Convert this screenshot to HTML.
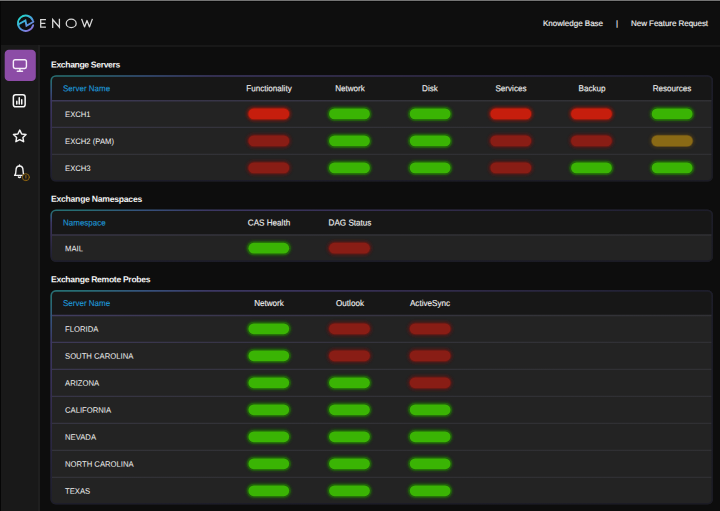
<!DOCTYPE html>
<html><head><meta charset="utf-8"><title>ENOW</title>
<style>
html,body{margin:0;padding:0;}
body{width:720px;height:511px;overflow:hidden;background:#0d0d0d;position:relative;font-family:"Liberation Sans",sans-serif;color:#ececec;}
#topline{position:absolute;left:0;top:0;width:720px;height:1px;background:#747474;border-bottom:1px solid #070707;z-index:5;}
#leftline{position:absolute;left:0;top:1px;width:1px;height:510px;background:#060606;z-index:5;}
#hdr{position:absolute;left:0;top:1px;width:720px;height:44px;background:#0e0e0e;border-bottom:2px solid #181818;}
#side{position:absolute;left:1px;top:45px;width:37px;height:466px;background:#191919;border-right:2px solid #1f1f1f;}
.nav{position:absolute;top:15px;font-size:8px;line-height:16px;color:#f0f0f0;white-space:nowrap;transform:translateY(1.0px) scaleY(1.0) rotate(0.03deg);-webkit-text-stroke:0.15px #f0f0f0;}
.ttl{position:absolute;left:51px;font-size:8.6px;font-weight:bold;line-height:16px;color:#f2f2f2;white-space:nowrap;letter-spacing:-0.35px;}
.hc{position:absolute;font-size:8.1px;line-height:16px;white-space:nowrap;color:#efefef;transform:scaleY(1.09);-webkit-text-stroke:0.12px #efefef;}
.hc.b{color:#1e98d8;font-size:8px;-webkit-text-stroke:0.12px #1e98d8;}
.hc.c{width:100px;text-align:center;}
.rc{position:absolute;font-size:7.7px;line-height:16px;white-space:nowrap;color:#f0f0f0;}
svg{position:absolute;overflow:visible;}
</style></head><body>
<div id="topline"></div><div id="leftline"></div>
<div id="hdr"></div>
<div id="side"></div>

<!-- tables / pills / logo / icons graphics -->
<svg style="left:0;top:0" width="720" height="511" viewBox="0 0 720 511" fill="none">
<defs>
<linearGradient id="lg" gradientUnits="userSpaceOnUse" x1="19" y1="15" x2="32" y2="32"><stop offset="0" stop-color="#1be3c8"/><stop offset="0.5" stop-color="#4a9fdc"/><stop offset="1" stop-color="#a066dc"/></linearGradient>
<linearGradient id="gb" x1="0" y1="0" x2="1" y2="1">
<stop offset="0" stop-color="#276f73"/><stop offset="0.025" stop-color="#276c73"/><stop offset="0.07" stop-color="#35517c"/><stop offset="0.12" stop-color="#3c3763"/><stop offset="0.26" stop-color="#342d4f"/><stop offset="0.42" stop-color="#242338"/><stop offset="0.5" stop-color="#1d1d2a"/><stop offset="1" stop-color="#1b1b24"/>
</linearGradient>
<linearGradient id="gs" x1="0" y1="0" x2="1" y2="1">
<stop offset="0" stop-color="#464268"/><stop offset="0.10" stop-color="#3e3a5a"/><stop offset="0.22" stop-color="#38354a"/><stop offset="0.40" stop-color="#333339"/><stop offset="0.60" stop-color="#303034"/><stop offset="1" stop-color="#2f2f32"/>
</linearGradient>
<filter id="bl" x="-20%" y="-50%" width="140%" height="200%"><feGaussianBlur stdDeviation="0.9"/></filter>
<g id="pg"><rect x="-23.00" y="-7.95" width="46.00" height="15.90" rx="7.95" fill="#1f550c" opacity="0.6" filter="url(#bl)"/><rect x="-22.10" y="-7.05" width="44.20" height="14.10" rx="7.05" fill="#225c0d"/><rect x="-20.40" y="-5.35" width="40.8" height="10.7" rx="5.35" fill="#3ab404"/></g>
<g id="pr"><rect x="-23.00" y="-7.95" width="46.00" height="15.90" rx="7.95" fill="#78190f" opacity="0.6" filter="url(#bl)"/><rect x="-21.40" y="-6.35" width="42.80" height="12.70" rx="6.35" fill="#7a1c12"/><rect x="-20.40" y="-5.35" width="40.8" height="10.7" rx="5.35" fill="#c61e0d"/></g>
<g id="pd"><rect x="-23.00" y="-7.95" width="46.00" height="15.90" rx="7.95" fill="#5a1814" opacity="0.55" filter="url(#bl)"/><rect x="-21.40" y="-6.35" width="42.80" height="12.70" rx="6.35" fill="#5a1a16"/><rect x="-20.40" y="-5.35" width="40.8" height="10.7" rx="5.35" fill="#891d15"/></g>
<g id="py"><rect x="-23.00" y="-7.95" width="46.00" height="15.90" rx="7.95" fill="#503e14" opacity="0.4" filter="url(#bl)"/><rect x="-21.20" y="-6.15" width="42.40" height="12.30" rx="6.15" fill="#5a4618"/><rect x="-20.40" y="-5.35" width="40.8" height="10.7" rx="5.35" fill="#8a6a15"/></g>
</defs>

<!-- active nav tile -->
<rect x="4.7" y="49.8" width="31.1" height="31.3" rx="4.2" fill="#8c4ca6"/>

<!-- logo -->
<path d="M32.8 20.3 A7.7 7.7 0 1 0 33.14 25.24" stroke="url(#lg)" stroke-width="1.9" stroke-linecap="round"/>
<path d="M18.2 24.5 L25.4 20.5 L26.5 25.8 L33.4 21.8" stroke="url(#lg)" stroke-width="1.9" stroke-linejoin="miter" stroke-linecap="round"/>
<g stroke="#d8d8d8" stroke-width="1.3" stroke-linecap="square" stroke-linejoin="miter">
<path d="M45.3 19.6 H40.7 V27.2 H45.3 M40.7 23.3 H44.7"/>
<path d="M52.7 27.3 V19.5 L59.4 27.2 V19.5"/>
<ellipse cx="71.2" cy="23.4" rx="4.95" ry="4.2"/>
<path d="M81.8 19.5 L84.5 26.9 L87.0 20.5 L89.5 26.9 L92.2 19.5" stroke-linejoin="round"/>
</g>

<!-- sidebar icons -->
<g transform="translate(12.6 59) scale(0.9733 1)" stroke="#f6eefa" stroke-width="1.45" stroke-linecap="round" stroke-linejoin="round">
<rect x="0.8" y="0.8" width="13.4" height="8.6" rx="1.8"/><path d="M7.5 9.6V12M4.8 12.2H10.2"/>
</g>
<g transform="translate(12.6 94) scale(0.95 0.9714)" stroke="#f6f6f6" stroke-width="1.6" stroke-linecap="round">
<rect x="0.8" y="0.8" width="12.4" height="12.4" rx="2.4"/><path d="M4.4 10.2V7.6M7 10.2V3.9M9.6 10.2V6"/>
</g>
<g transform="translate(12.55 129.1) scale(1.03 1.0)" stroke="#f2f2f2" stroke-width="1.45" stroke-linejoin="round">
<path d="M7 1.0 L8.85 4.85 L13.1 5.45 L10.05 8.4 L10.75 12.6 L7 10.6 L3.25 12.6 L3.95 8.4 L0.9 5.45 L5.15 4.85 Z"/>
</g>
<g transform="translate(13.5 164)" stroke="#f2f2f2" stroke-width="1.4" stroke-linecap="round" stroke-linejoin="round">
<path d="M6 0.9V2"/>
<path d="M1.1 11.4 C2.4 10.2 2.5 8.8 2.5 6.2 C2.5 3.6 3.9 2.0 6 2.0 C8.1 2.0 9.5 3.6 9.5 6.2 C9.5 8.8 9.6 10.2 10.9 11.4 Z"/><path d="M4.9 12.9 C5.3 13.7 6.7 13.7 7.1 12.9"/>
<circle cx="12.4" cy="13.2" r="3.5" stroke="#8f6410" stroke-width="1" fill="#191919"/><path d="M12.4 11.5V13.6M12.4 14.9V15" stroke="#a87412" stroke-width="0.9"/>
</g>

<clipPath id="c1"><rect x="50.4" y="75.2" width="662.6" height="106.4" rx="5.5"/></clipPath>
<g clip-path="url(#c1)">
<rect x="50.4" y="75.2" width="662.6" height="106.4" fill="#232323"/>
<rect x="50.4" y="75.2" width="662.6" height="25.4" fill="#171717"/>
<clipPath id="s1"><rect x="50.4" y="99.90" width="662.6" height="1.5"/><rect x="50.4" y="126.80" width="662.6" height="1.3"/><rect x="50.4" y="153.80" width="662.6" height="1.3"/></clipPath>
<rect x="50.4" y="75.2" width="662.6" height="106.4" fill="url(#gs)" clip-path="url(#s1)"/>
</g>
<rect x="51.20" y="76.00" width="661.00" height="104.80" rx="4.8" fill="none" stroke="url(#gb)" stroke-width="1.6"/>
<use href="#pr" x="268.80" y="113.90"/>
<use href="#pg" x="349.47" y="113.90"/>
<use href="#pg" x="430.14" y="113.90"/>
<use href="#pr" x="510.81" y="113.90"/>
<use href="#pr" x="591.48" y="113.90"/>
<use href="#pg" x="672.15" y="113.90"/>
<use href="#pd" x="268.80" y="140.90"/>
<use href="#pg" x="349.47" y="140.90"/>
<use href="#pg" x="430.14" y="140.90"/>
<use href="#pd" x="510.81" y="140.90"/>
<use href="#pd" x="591.48" y="140.90"/>
<use href="#py" x="672.15" y="140.90"/>
<use href="#pd" x="268.80" y="167.90"/>
<use href="#pg" x="349.47" y="167.90"/>
<use href="#pg" x="430.14" y="167.90"/>
<use href="#pd" x="510.81" y="167.90"/>
<use href="#pg" x="591.48" y="167.90"/>
<use href="#pg" x="672.15" y="167.90"/>
<clipPath id="c2"><rect x="50.4" y="209.5" width="662.6" height="52.4" rx="5.5"/></clipPath>
<g clip-path="url(#c2)">
<rect x="50.4" y="209.5" width="662.6" height="52.4" fill="#232323"/>
<rect x="50.4" y="209.5" width="662.6" height="25.4" fill="#171717"/>
<clipPath id="s2"><rect x="50.4" y="234.20" width="662.6" height="1.5"/></clipPath>
<rect x="50.4" y="209.5" width="662.6" height="52.4" fill="url(#gs)" clip-path="url(#s2)"/>
</g>
<rect x="51.20" y="210.30" width="661.00" height="50.80" rx="4.8" fill="none" stroke="url(#gb)" stroke-width="1.6"/>
<use href="#pg" x="268.80" y="248.20"/>
<use href="#pd" x="349.47" y="248.20"/>
<clipPath id="c3"><rect x="50.4" y="290.1" width="662.6" height="214.4" rx="5.5"/></clipPath>
<g clip-path="url(#c3)">
<rect x="50.4" y="290.1" width="662.6" height="214.4" fill="#232323"/>
<rect x="50.4" y="290.1" width="662.6" height="25.4" fill="#171717"/>
<clipPath id="s3"><rect x="50.4" y="314.80" width="662.6" height="1.5"/><rect x="50.4" y="341.70" width="662.6" height="1.3"/><rect x="50.4" y="368.70" width="662.6" height="1.3"/><rect x="50.4" y="395.70" width="662.6" height="1.3"/><rect x="50.4" y="422.70" width="662.6" height="1.3"/><rect x="50.4" y="449.70" width="662.6" height="1.3"/><rect x="50.4" y="476.70" width="662.6" height="1.3"/></clipPath>
<rect x="50.4" y="290.1" width="662.6" height="214.4" fill="url(#gs)" clip-path="url(#s3)"/>
</g>
<rect x="51.20" y="290.90" width="661.00" height="212.80" rx="4.8" fill="none" stroke="url(#gb)" stroke-width="1.6"/>
<use href="#pg" x="268.80" y="328.80"/>
<use href="#pd" x="349.47" y="328.80"/>
<use href="#pd" x="430.14" y="328.80"/>
<use href="#pg" x="268.80" y="355.80"/>
<use href="#pd" x="349.47" y="355.80"/>
<use href="#pd" x="430.14" y="355.80"/>
<use href="#pg" x="268.80" y="382.80"/>
<use href="#pg" x="349.47" y="382.80"/>
<use href="#pd" x="430.14" y="382.80"/>
<use href="#pg" x="268.80" y="409.80"/>
<use href="#pg" x="349.47" y="409.80"/>
<use href="#pg" x="430.14" y="409.80"/>
<use href="#pg" x="268.80" y="436.80"/>
<use href="#pg" x="349.47" y="436.80"/>
<use href="#pg" x="430.14" y="436.80"/>
<use href="#pg" x="268.80" y="463.80"/>
<use href="#pg" x="349.47" y="463.80"/>
<use href="#pg" x="430.14" y="463.80"/>
<use href="#pg" x="268.80" y="490.80"/>
<use href="#pg" x="349.47" y="490.80"/>
<use href="#pg" x="430.14" y="490.80"/>
</svg>

<span class="nav" style="left:543px">Knowledge Base</span>
<span class="nav" style="left:616px">|</span>
<span class="nav" style="left:631px;letter-spacing:-0.04px">New Feature Request</span>

<div class="ttl" style="top:56px;transform:translateY(0.57px) rotate(0.03deg)">Exchange Servers</div>
<div class="ttl" style="top:190px;letter-spacing:-0.24px;transform:translateY(0.87px) rotate(0.03deg)">Exchange Namespaces</div>
<div class="ttl" style="top:271px;letter-spacing:-0.31px;transform:translateY(0.17px) rotate(0.03deg)">Exchange Remote Probes</div>

<span class="hc b" style="left:63px;top:81px;transform:translateY(0.05px) scaleY(1.06) rotate(0.03deg)">Server Name</span>
<span class="hc c" style="left:218.8px;top:81px;transform:translateY(0.05px) scaleY(1.06) rotate(0.03deg)">Functionality</span>
<span class="hc c" style="left:299.5px;top:81px;transform:translateY(0.05px) scaleY(1.06) rotate(0.03deg)">Network</span>
<span class="hc c" style="left:380.1px;top:81px;transform:translateY(0.05px) scaleY(1.06) rotate(0.03deg)">Disk</span>
<span class="hc c" style="left:460.8px;top:81px;transform:translateY(0.05px) scaleY(1.06) rotate(0.03deg)">Services</span>
<span class="hc c" style="left:541.5px;top:81px;transform:translateY(0.05px) scaleY(1.06) rotate(0.03deg)">Backup</span>
<span class="hc c" style="left:622.2px;top:81px;transform:translateY(0.05px) scaleY(1.06) rotate(0.03deg)">Resources</span>
<span class="rc" style="left:65px;top:106px;transform:translateY(0.85px) scaleY(1.03) rotate(0.03deg)">EXCH1</span>
<span class="rc" style="left:65px;top:133px;transform:translateY(0.85px) scaleY(1.03) rotate(0.03deg)">EXCH2 (PAM)</span>
<span class="rc" style="left:65px;top:160px;transform:translateY(0.85px) scaleY(1.03) rotate(0.03deg)">EXCH3</span>
<span class="hc b" style="left:63px;top:215px;transform:translateY(0.35px) scaleY(1.06) rotate(0.03deg)">Namespace</span>
<span class="hc c" style="left:218.8px;top:215px;transform:translateY(0.35px) scaleY(1.06) rotate(0.03deg)">CAS Health</span>
<span class="hc c" style="left:299.5px;top:215px;transform:translateY(0.35px) scaleY(1.06) rotate(0.03deg)">DAG Status</span>
<span class="rc" style="left:65px;top:241px;transform:translateY(0.15px) scaleY(1.03) rotate(0.03deg)">MAIL</span>
<span class="hc b" style="left:63px;top:295px;transform:translateY(0.95px) scaleY(1.06) rotate(0.03deg)">Server Name</span>
<span class="hc c" style="left:218.8px;top:295px;transform:translateY(0.95px) scaleY(1.06) rotate(0.03deg)">Network</span>
<span class="hc c" style="left:299.5px;top:295px;transform:translateY(0.95px) scaleY(1.06) rotate(0.03deg)">Outlook</span>
<span class="hc c" style="left:380.1px;top:295px;transform:translateY(0.95px) scaleY(1.06) rotate(0.03deg)">ActiveSync</span>
<span class="rc" style="left:65px;top:321px;transform:translateY(0.75px) scaleY(1.03) rotate(0.03deg)">FLORIDA</span>
<span class="rc" style="left:65px;top:348px;transform:translateY(0.75px) scaleY(1.03) rotate(0.03deg)">SOUTH CAROLINA</span>
<span class="rc" style="left:65px;top:375px;transform:translateY(0.75px) scaleY(1.03) rotate(0.03deg)">ARIZONA</span>
<span class="rc" style="left:65px;top:402px;transform:translateY(0.75px) scaleY(1.03) rotate(0.03deg)">CALIFORNIA</span>
<span class="rc" style="left:65px;top:429px;transform:translateY(0.75px) scaleY(1.03) rotate(0.03deg)">NEVADA</span>
<span class="rc" style="left:65px;top:456px;transform:translateY(0.75px) scaleY(1.03) rotate(0.03deg)">NORTH CAROLINA</span>
<span class="rc" style="left:65px;top:483px;transform:translateY(0.75px) scaleY(1.03) rotate(0.03deg)">TEXAS</span>
</body></html>
